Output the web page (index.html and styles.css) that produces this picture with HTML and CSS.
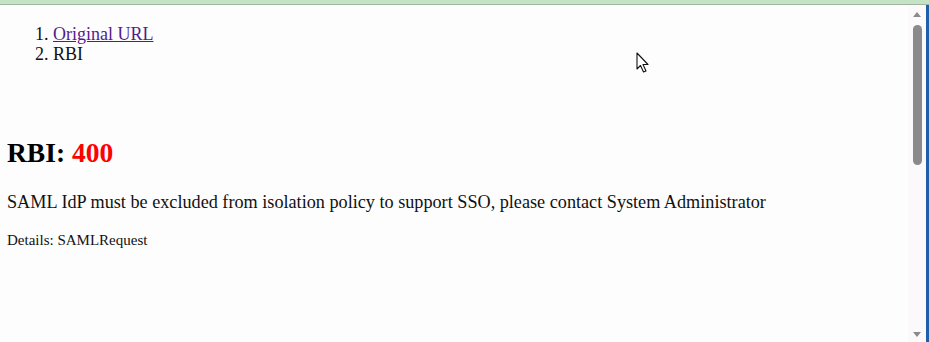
FILE: index.html
```html
<!DOCTYPE html>
<html>
<head>
<meta charset="utf-8">
<link rel="stylesheet" href="styles.css">
</head>
<body>
<div class="topbar"></div>
<div class="window">
  <div class="content">
    <ol class="crumbs">
      <li><a href="#">Original URL</a></li>
      <li>RBI</li>
    </ol>
    <h1 class="title">RBI: <span class="code">400</span></h1>
    <p class="msg">SAML IdP must be excluded from isolation policy to support SSO, please contact System Administrator</p>
    <p class="details">Details: SAMLRequest</p>
    <svg class="cursor" width="14" height="22" viewBox="0 0 14 22">
      <path d="M1 1 L1 17 L4.5 13.5 L7.5 20 L10 19 L7 12.5 L12 12.5 Z" fill="#fff" stroke="#111" stroke-width="1.1" stroke-linejoin="round"/>
    </svg>
  </div>
  <div class="scrollbar">
    <div class="arrow up"></div>
    <div class="thumb"></div>
    <div class="spacer"></div>
    <div class="arrow down"></div>
  </div>
  <div class="edge"></div>
</div>
</body>
</html>
```
FILE: styles.css
```css
html, body {
  margin: 0;
  padding: 0;
  height: 100%;
  overflow: hidden;
  background: #fdfdfd;
}
body {
  display: flex;
  flex-direction: column;
  font-family: "Liberation Serif", "Times New Roman", serif;
  color: #111;
}
.topbar {
  height: 4px;
  background: #c6e2c6;
  border-bottom: 1px solid #9fb59f;
  flex: none;
}
.window {
  flex: 1;
  display: flex;
  min-height: 0;
}
.content {
  flex: 1;
  position: relative;
  padding: 0 0 0 7px;
}
.crumbs {
  margin: 19px 0 0 0;
  padding-left: 46px;
  font-size: 18px;
  line-height: 20px;
}
.crumbs a {
  color: #551a8b;
}
.title {
  margin: 73px 0 0 0;
  font-size: 27.5px;
  line-height: 31px;
  font-weight: bold;
  color: #000;
}
.code {
  color: #ff0000;
}
.msg {
  margin: 24px 0 0 0;
  font-size: 18.2px;
  line-height: 20px;
}
.details {
  margin: 20px 0 0 0;
  font-size: 15px;
  line-height: 16px;
}
.cursor {
  position: absolute;
  left: 636px;
  top: 47px;
}
.scrollbar {
  width: 18px;
  flex: none;
  background: #fbf9f9;
  display: flex;
  flex-direction: column;
  align-items: center;
  padding: 7px 0 5px 0;
  box-sizing: border-box;
}
.arrow {
  width: 0;
  height: 0;
  border-left: 4px solid transparent;
  border-right: 4px solid transparent;
  flex: none;
}
.arrow.up {
  border-bottom: 5px solid #8a8a8a;
}
.arrow.down {
  border-top: 5px solid #8a8a8a;
}
.thumb {
  width: 9px;
  height: 140px;
  margin-top: 8px;
  background: #8a8a8a;
  border-radius: 5px;
  flex: none;
}
.spacer {
  flex: 1;
}
.edge {
  width: 3px;
  flex: none;
  background: #1d5fa8;
}
```
